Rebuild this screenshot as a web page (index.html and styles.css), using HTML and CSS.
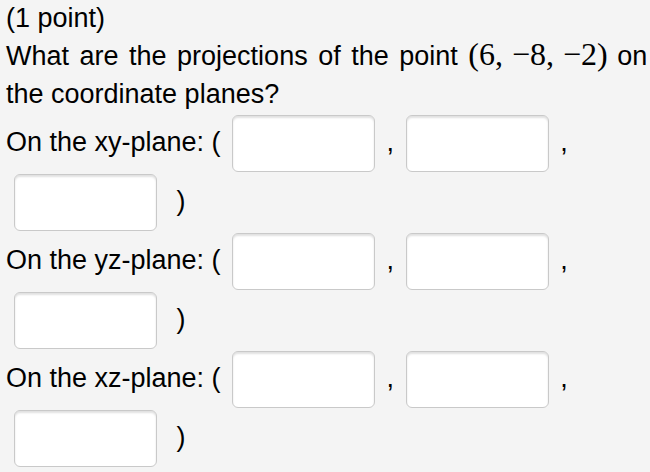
FILE: index.html
```html
<!DOCTYPE html>
<html>
<head>
<meta charset="utf-8">
<link rel="stylesheet" href="styles.css">
</head>
<body>
<div class="problem">
  <div class="line">(1 point)</div>
  <div class="line"><span class="wide">What are the projections of the point </span><span class="math">(6, &minus;8, &minus;2)</span> on the coordinate planes?</div>
  <div class="answer">On the xy-plane: ( <input class="box" type="text"> , <input class="box" type="text"> ,<br><input class="box wrapped" type="text"> )</div>
  <div class="answer">On the yz-plane: ( <input class="box" type="text"> , <input class="box" type="text"> ,<br><input class="box wrapped" type="text"> )</div>
  <div class="answer">On the xz-plane: ( <input class="box" type="text"> , <input class="box" type="text"> ,<br><input class="box wrapped" type="text"> )</div>
</div>
</body>
</html>
```
FILE: styles.css
```css
html, body {
  margin: 0;
  background: #f4f4f4;
}
.problem {
  padding: 0 0 0 6px;
  font-family: "Liberation Sans", Arial, sans-serif;
  font-size: 27px;
  line-height: 38px;
  color: #000;
}
.line {
  position: relative;
  top: -1px;
}
.wide {
  word-spacing: 3px;
}
.math {
  font-family: "Liberation Serif", "Times New Roman", serif;
  font-size: 32px;
  line-height: 30px;
  word-spacing: 1px;
  margin-right: 2px;
}
.box {
  box-sizing: border-box;
  width: 143px;
  height: 57px;
  margin: 1px 4px;
  padding: 0 8px;
  vertical-align: middle;
  background: #fff;
  border: 1px solid #c9c9c9;
  border-radius: 6px;
  box-shadow: inset 0 2px 2px rgba(0,0,0,0.12);
  font: inherit;
  outline: none;
}
.box.wrapped {
  margin-left: 8px;
  margin-right: 12px;
}
```
